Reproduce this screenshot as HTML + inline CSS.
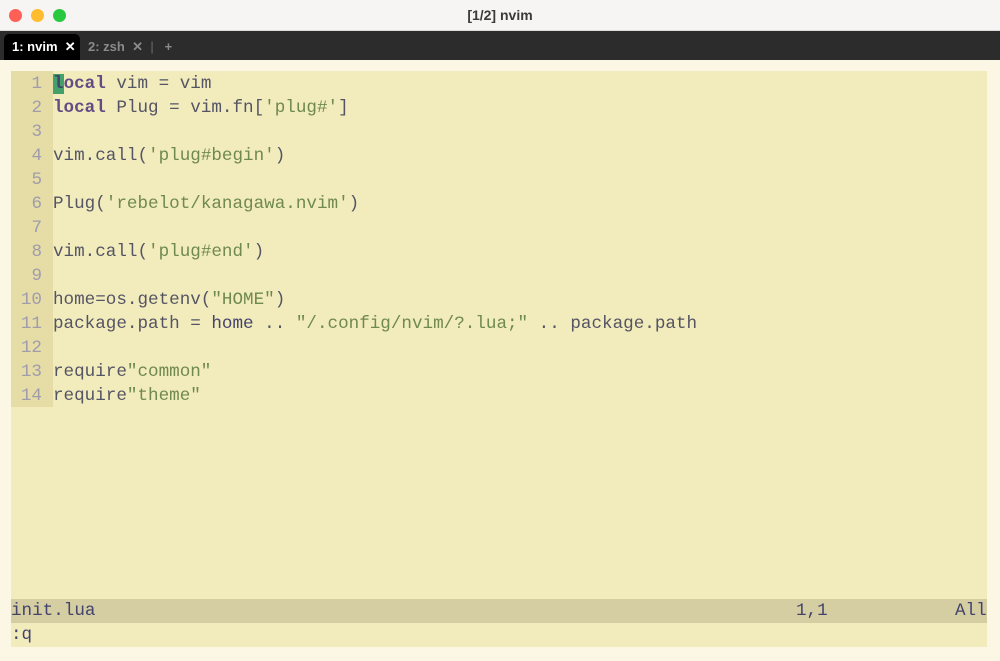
<!DOCTYPE html>
<html><head><style>
*{margin:0;padding:0;box-sizing:border-box}
body{width:1000px;height:661px;background:#fcf7e4;position:relative;overflow:hidden;font-family:"Liberation Sans",sans-serif}
.title{position:absolute;left:0;top:0;width:1000px;height:31px;background:#f6f5f4;border-bottom:1px solid #dcdcdc;text-align:center;font-size:14px;line-height:30px;color:#3a3a3a;font-weight:bold}
.dot{position:absolute;top:9px;width:13px;height:13px;border-radius:50%}
.tabs{position:absolute;left:0;top:31px;width:1000px;height:29px;background:#2c2c2c}
.tab1{position:absolute;left:4px;top:3px;width:76px;height:26px;background:#000;border-radius:5px 5px 0 0;color:#fff;font-size:13px;line-height:26px;padding-left:8px;font-weight:bold}
.tab2{position:absolute;left:88px;top:3px;color:#8a8a8a;font-size:13px;line-height:26px;font-weight:bold}
.ed{position:absolute;left:11px;top:71px;width:976px;height:576px;background:#f2ecbc}
.gut{position:absolute;left:0;top:0;width:42px;height:336px;background:#e6dca6}
.code{position:absolute;left:0;top:1px;font-family:"Liberation Mono",monospace;font-size:17.6px;line-height:24px;color:#545464;white-space:pre}
.n{display:inline-block;width:31px;text-align:right;color:#a09cac;margin-right:11px}
.k{color:#624c83;font-weight:bold}
.s{color:#6f894e}
.v{color:#43436c}
.st{position:absolute;left:0;top:528px;width:976px;height:24px;background:#d5cea3;font-family:"Liberation Mono",monospace;font-size:17.6px;line-height:24px;color:#43436c;white-space:pre}
.cmd{position:absolute;left:0;top:552px;font-family:"Liberation Mono",monospace;font-size:17.6px;line-height:24px;color:#43436c}
.cur{background:#43a06a;color:#43436c}
</style></head><body>
<div class="title">[1/2] nvim
<div class="dot" style="left:9px;background:#fe5f57"></div>
<div class="dot" style="left:31px;background:#febc2e"></div>
<div class="dot" style="left:53px;background:#28c840"></div>
</div>
<div class="tabs">
<div class="tab1">1: nvim &nbsp;✕</div>
<div class="tab2">2: zsh &nbsp;✕ &nbsp;<span style="color:#555">|</span> &nbsp;&nbsp;+</div>
</div>
<div class="ed">
<div class="gut"></div>
<div class="code"><span class="n">1</span><span class="k"><span class="cur">l</span>ocal</span> vim = vim
<span class="n">2</span><span class="k">local</span> Plug = vim.fn[<span class="s">'plug#'</span>]
<span class="n">3</span>
<span class="n">4</span>vim.call(<span class="s">'plug#begin'</span>)
<span class="n">5</span>
<span class="n">6</span>Plug(<span class="s">'rebelot/kanagawa.nvim'</span>)
<span class="n">7</span>
<span class="n">8</span>vim.call(<span class="s">'plug#end'</span>)
<span class="n">9</span>
<span class="n">10</span>home=os.getenv(<span class="s">"HOME"</span>)
<span class="n">11</span>package.path = <span class="v">home</span> .. <span class="s">"/.config/nvim/?.lua;"</span> .. package.path
<span class="n">12</span>
<span class="n">13</span>require<span class="s">"common"</span>
<span class="n">14</span>require<span class="s">"theme"</span></div>
<div class="st">init.lua<span style="position:absolute;left:785px">1,1</span><span style="position:absolute;left:944px">All</span></div>
<div class="cmd">:q</div>
</div>
</body></html>
